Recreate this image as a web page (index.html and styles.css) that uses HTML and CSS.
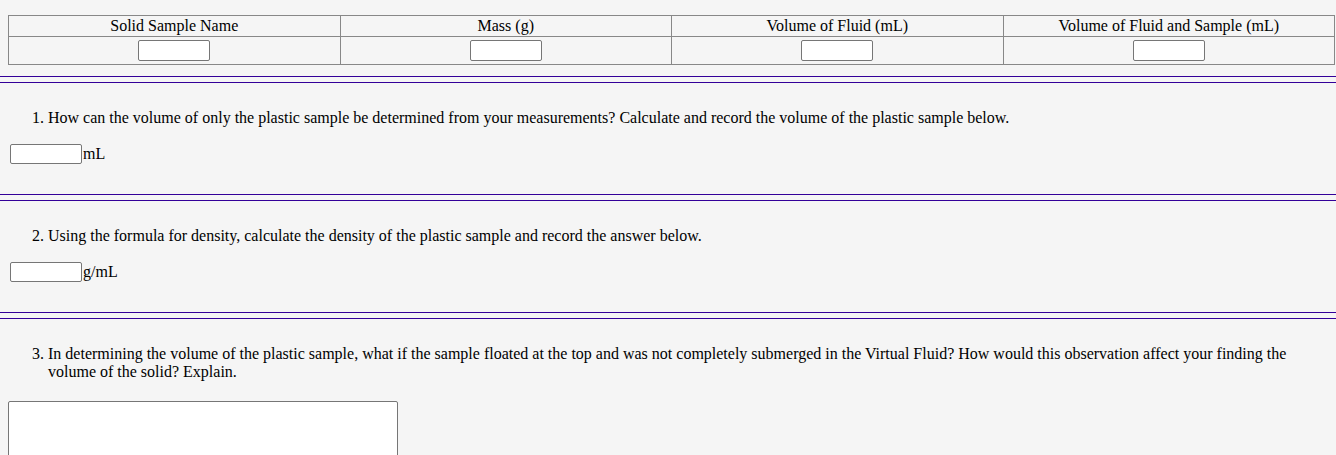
FILE: index.html
```html
<!DOCTYPE html>
<html lang="en">
<head>
    <meta charset="UTF-8">
    <meta name="viewport" content="width=device-width, initial-scale=1.0">
    <title>Density of a Plastic Sample</title>
    <link rel="stylesheet" href="styles.css">
</head>
<body>
    <table class="data-table">
        <tr>
            <th>Solid Sample Name</th>
            <th>Mass (g)</th>
            <th>Volume of Fluid (mL)</th>
            <th>Volume of Fluid and Sample (mL)</th>
        </tr>
        <tr>
            <td><input type="text" class="cell-input"></td>
            <td><input type="text" class="cell-input"></td>
            <td><input type="text" class="cell-input"></td>
            <td><input type="text" class="cell-input"></td>
        </tr>
    </table>

    <div class="divider"></div>

    <div class="question">
        <ol start="1">
            <li>How can the volume of only the plastic sample be determined from your measurements? Calculate and record the volume of the plastic sample below.</li>
        </ol>
        <div class="answer-row">
            <input type="text" class="answer-input"><span class="unit">mL</span>
        </div>
    </div>

    <div class="divider"></div>

    <div class="question">
        <ol start="2">
            <li>Using the formula for density, calculate the density of the plastic sample and record the answer below.</li>
        </ol>
        <div class="answer-row">
            <input type="text" class="answer-input"><span class="unit">g/mL</span>
        </div>
    </div>

    <div class="divider"></div>

    <div class="question last">
        <ol start="3">
            <li>In determining the volume of the plastic sample, what if the sample floated at the top and was not completely submerged in the Virtual Fluid? How would this observation affect your finding the volume of the solid? Explain.</li>
        </ol>
        <textarea class="explain"></textarea>
    </div>
</body>
</html>
```

FILE: styles.css
```css
:root {
    --page-bg: #f5f5f5;
    --rule-color: #330099;
    --cell-border: #888888;
    --field-border: #767676;
}

* {
    box-sizing: border-box;
}

body {
    margin: 0;
    background-color: var(--page-bg);
    font-family: "Liberation Serif", "Times New Roman", serif;
    font-size: 16px;
    color: #000;
}

.data-table {
    width: calc(100% - 9px);
    margin: 15px 1px 0 8px;
    border-collapse: collapse;
    table-layout: fixed;
}

.data-table th,
.data-table td {
    border: 1px solid var(--cell-border);
    text-align: center;
    font-weight: normal;
    padding: 0;
}

.data-table th {
    height: 21px;
}

.data-table td {
    height: 28px;
}

.cell-input,
.answer-input {
    width: 72px;
    height: 21px;
    border: 1px solid var(--field-border);
    border-radius: 2px;
    background: white;
    vertical-align: middle;
    font: inherit;
}

.divider {
    height: 7px;
    margin-top: 11px;
    border-top: 1px solid var(--rule-color);
    border-bottom: 1px solid var(--rule-color);
}

.question {
    height: 100px;
    padding-top: 26px;
}

.question ol {
    margin: 0;
    padding-left: 48px;
    padding-right: 40px;
    line-height: 18px;
}

.answer-row {
    display: flex;
    align-items: center;
    margin-top: 17px;
    padding-left: 10px;
}

.answer-input {
    height: 20px;
}

.unit {
    margin-left: 1px;
}

.question.last {
    height: auto;
}

.explain {
    display: block;
    width: 390px;
    height: 80px;
    margin: 20px 0 0 8px;
    border: 1px solid var(--field-border);
    border-radius: 2px;
    background: white;
}
```
